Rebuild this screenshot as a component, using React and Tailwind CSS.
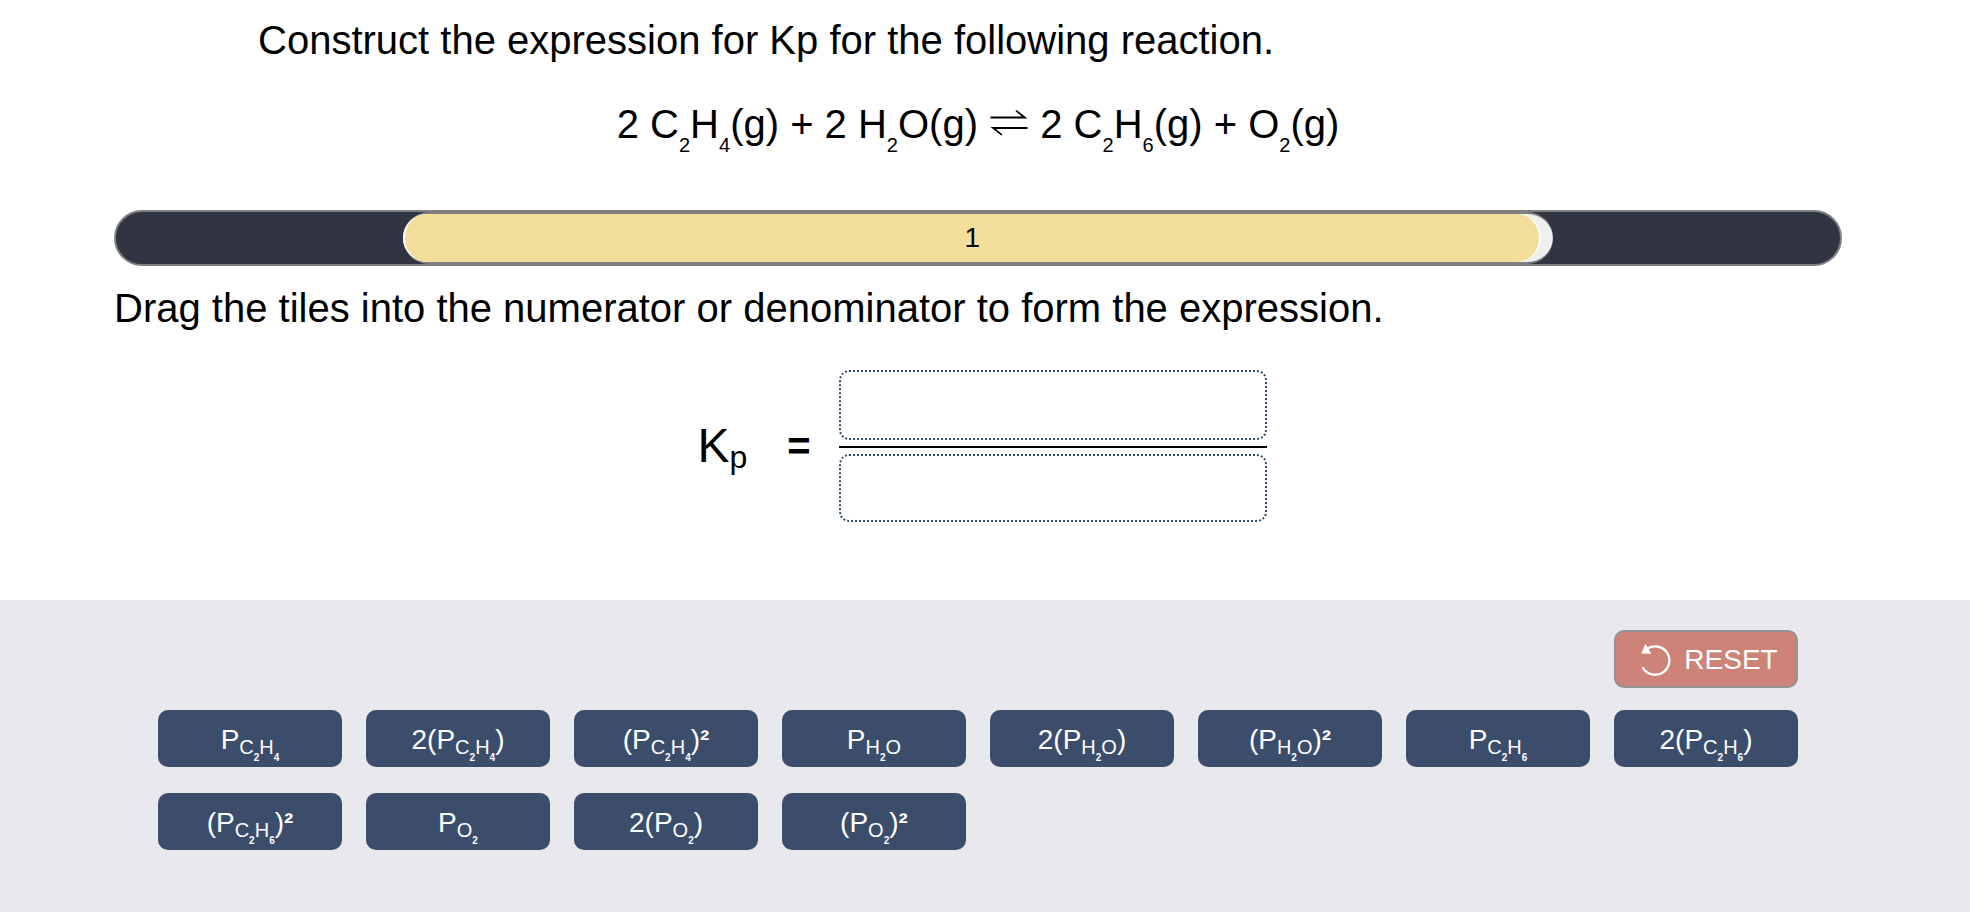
import { useState } from 'react';

const TILES = [
  { id: 'c2h4', species: 'C2H4' },
  { id: '2c2h4', before: '2(', species: 'C2H4', after: ')' },
  { id: 'c2h4sq', before: '(', species: 'C2H4', after: ')', squared: true },
  { id: 'h2o', species: 'H2O' },
  { id: '2h2o', before: '2(', species: 'H2O', after: ')' },
  { id: 'h2osq', before: '(', species: 'H2O', after: ')', squared: true },
  { id: 'c2h6', species: 'C2H6' },
  { id: '2c2h6', before: '2(', species: 'C2H6', after: ')' },
  { id: 'c2h6sq', before: '(', species: 'C2H6', after: ')', squared: true },
  { id: 'o2', species: 'O2' },
  { id: '2o2', before: '2(', species: 'O2', after: ')' },
  { id: 'o2sq', before: '(', species: 'O2', after: ')', squared: true },
];

// Splits "C2H4" into letters and lowered digits
const Formula = ({ value, subClass }) =>
  value.split(/(\d+)/).map((part, i) =>
    /^\d+$/.test(part) ? (
      <sub key={i} className={subClass}>
        {part}
      </sub>
    ) : (
      part
    )
  );

const Gas = ({ value }) => (
  <>
    <Formula value={value} subClass="bottom-[-14px] text-xl leading-none" />
    (g)
  </>
);

const EquilibriumArrow = () => (
  <svg
    role="img"
    aria-label="is in equilibrium with"
    width="40"
    height="28"
    viewBox="0 0 40 28"
    fill="black"
    className="inline-block align-baseline"
  >
    <path d="M1.5 6.6H33L26.5 1.2L27.6 0L38.5 8.6H1.5Z" />
    <path d="M38.5 19H7L13.5 24.4L12.4 25.6L1.5 17H38.5Z" />
  </svg>
);

const ResetIcon = () => (
  <svg width="32" height="34" viewBox="0 0 32 34" fill="none" aria-hidden="true">
    <path d="M2.6 24.2A14.2 14.2 0 1 0 7.5 5.6" stroke="white" strokeWidth="2.4" />
    <path d="M5.4 0.8L1.4 10.4L11.4 10.8Z" fill="white" />
  </svg>
);

const Tile = ({ tile, onDragStart }) => (
  <button
    type="button"
    draggable
    onDragStart={(e) => onDragStart(e, tile.id)}
    className="h-[57px] rounded-[10px] bg-[#3b4d6b] pt-0.5 text-[28px] leading-8 text-white whitespace-nowrap"
  >
    {tile.before}P
    <sub className="bottom-[-5px] text-xl leading-none">
      <Formula value={tile.species} subClass="bottom-[-7px] text-[10px] leading-none font-bold" />
    </sub>
    {tile.after}
    {tile.squared && <span className="font-bold">²</span>}
  </button>
);

const DropZone = ({ label, tiles, onDrop, className }) => (
  <div
    role="group"
    aria-label={label}
    onDragOver={(e) => e.preventDefault()}
    onDrop={onDrop}
    className={`flex items-center justify-center gap-2 rounded-[10px] border-2 border-dotted border-[#2b4766] ${className}`}
  >
    {tiles.map((id) => (
      <div key={id} className="grid w-[184px]">
        <Tile tile={TILES.find((t) => t.id === id)} onDragStart={() => {}} />
      </div>
    ))}
  </div>
);

const App = () => {
  const [numerator, setNumerator] = useState([]);
  const [denominator, setDenominator] = useState([]);

  const handleDragStart = (e, id) => {
    e.dataTransfer.setData('text/plain', id);
  };

  const handleDrop = (setter) => (e) => {
    e.preventDefault();
    const id = e.dataTransfer.getData('text/plain');
    setter((prev) => [...prev, id]);
  };

  const handleReset = () => {
    setNumerator([]);
    setDenominator([]);
  };

  const used = [...numerator, ...denominator];

  return (
    <div className="flex min-h-screen flex-col bg-white font-['Liberation_Sans',Arial,sans-serif] text-black">
      <main className="flex flex-col pt-4 pr-32 pb-[78px] pl-[114px]">
        <h1 className="pl-36 text-[40px] leading-12">
          Construct the expression for Kp for the following reaction.
        </h1>

        {/* Reaction */}
        <p className="mt-9 h-12 text-center text-[40px] leading-12 whitespace-nowrap">
          2 <Gas value="C2H4" /> + 2 <Gas value="H2O" /> <EquilibriumArrow /> 2{' '}
          <Gas value="C2H6" /> + <Gas value="O2" />
        </p>

        {/* Step bar */}
        <nav
          aria-label="Steps"
          className="mt-[62px] flex h-14 justify-center rounded-full border-2 border-[#808080] bg-[#313543]"
        >
          <button
            type="button"
            className="flex w-2/3 rounded-full border-y-2 border-[#808080] bg-[#efefef] text-[28px]"
          >
            <span className="flex h-full w-[99%] items-center justify-center rounded-full border-x-2 border-white bg-[#f3df9b]">
              1
            </span>
          </button>
        </nav>

        <p className="mt-[18px] text-[40px] leading-12">
          Drag the tiles into the numerator or denominator to form the expression.
        </p>

        {/* Expression */}
        <div className="mt-[38px] flex items-center justify-center pl-2">
          <span className="text-5xl">
            K<sub className="bottom-[-6px] text-[32px] leading-none">p</sub>
          </span>
          <span className="ml-10 text-[40px] font-bold">=</span>
          <div className="ml-7 flex w-[428px] flex-col gap-1.5">
            <DropZone
              label="Numerator"
              tiles={numerator}
              onDrop={handleDrop(setNumerator)}
              className="min-h-[70px]"
            />
            <hr className="border-t-2 border-black" />
            <DropZone
              label="Denominator"
              tiles={denominator}
              onDrop={handleDrop(setDenominator)}
              className="min-h-[68px]"
            />
          </div>
        </div>
      </main>

      {/* Tile tray */}
      <section className="flex flex-1 flex-col bg-[#e9e8ed] pt-[30px] pr-[172px] pb-14 pl-[158px]">
        <button
          type="button"
          onClick={handleReset}
          className="flex h-[58px] w-[184px] items-center justify-center gap-3 self-end rounded-[10px] border-2 border-[#939393] bg-[#cd8378] pt-0.5 pl-1.5 text-[28px] text-white"
        >
          <ResetIcon />
          RESET
        </button>

        <div className="mt-[22px] grid grid-cols-8 gap-x-6 gap-y-[26px]">
          {TILES.filter((tile) => !used.includes(tile.id)).map((tile) => (
            <Tile key={tile.id} tile={tile} onDragStart={handleDragStart} />
          ))}
        </div>
      </section>
    </div>
  );
};

export default App;
